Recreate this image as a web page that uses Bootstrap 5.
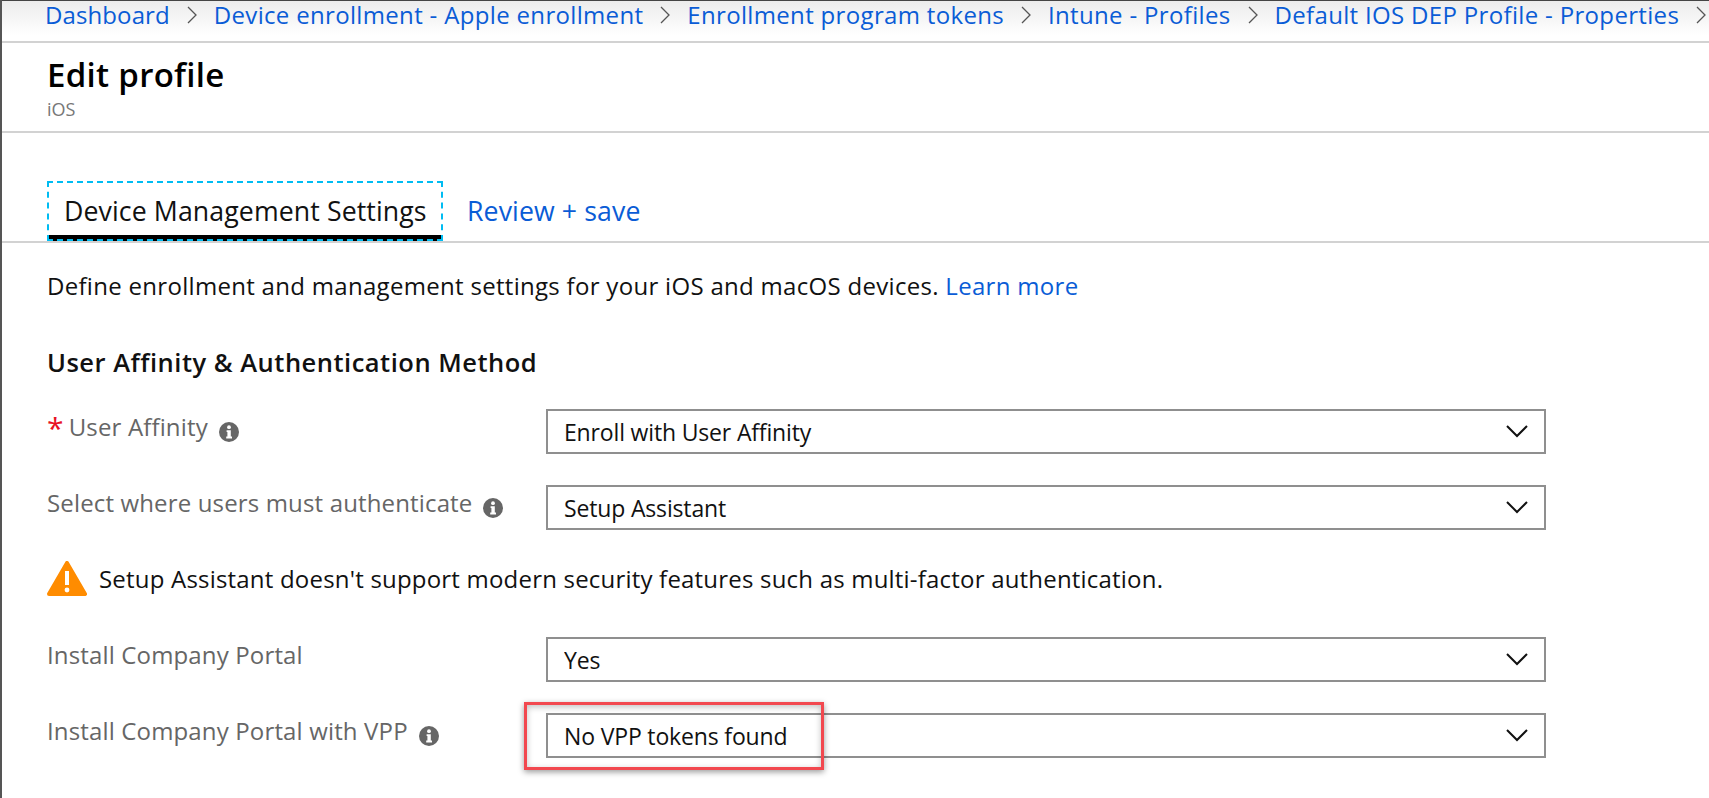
<!DOCTYPE html>
<html lang="en">
<head>
  <meta charset="UTF-8">
  <meta name="viewport" content="width=device-width, initial-scale=1.0">
  <title>Edit profile</title>
  <link href="https://cdn.jsdelivr.net/npm/bootstrap@5.3.0/dist/css/bootstrap.min.css" rel="stylesheet">
  <style>
    body {
      font-family: "Open Sans", "Noto Sans", sans-serif;
      font-size: 24px;
      letter-spacing: 0.33px;
      color: #111;
      background: #fff;
      height: 798px;
      overflow: hidden;
      position: relative;
      border-left: 2px solid #555;
    }
    a { color: #0a5cd6; text-decoration: none; }

    .crumb-bar {
      height: 43px;
      padding: 0 0 12px 43px;
      gap: 17px;
      line-height: 28px;
      border-top: 1px solid #444;
      border-bottom: 2px solid #d2d2d2;
      background: linear-gradient(#ececec, #fff 85%);
      white-space: nowrap;
    }
    .crumb-bar svg { flex: none; }
    .crumb-first { letter-spacing: 0.1px; }

    .page-head {
      height: 90px;
      padding: 9px 0 0 45px;
      border-bottom: 2px solid #d2d2d2;
    }
    .page-title { font-size: 33px; font-weight: 600; letter-spacing: 0.3px; line-height: 46px; margin: 0; color: #000; }
    .page-sub { font-size: 18px; letter-spacing: 0; line-height: 22px; color: #777; }

    .tab-strip {
      height: 62px;
      margin-top: 48px;
      padding-left: 45px;
      border-bottom: 2px solid #d2d2d2;
      gap: 24px;
      font-size: 26.7px;
      letter-spacing: 0.1px;
    }
    .tab-on {
      width: 396px;
      height: 60px;
      padding-left: 15px;
      color: #111;
      border: 2px dashed #00bcf2;
      background: linear-gradient(#000, #000) left bottom / 100% 6px no-repeat border-box;
    }

    .form-area { padding-left: 45px; }
    .intro { margin-top: 25px; line-height: 36px; letter-spacing: 0.3px; }
    .section-title { font-size: 25.5px; font-weight: 600; letter-spacing: 0.5px; margin: 40px 0 29px; line-height: 36px; }

    .field-row { height: 45px; }
    .field-next { margin-top: 31px; }
    .warn-next { margin-top: 40px; }
    .field-label { width: 499px; color: #666; gap: 11px; letter-spacing: 0.15px; }
    .label-text { margin-bottom: 9px; }
    .req { color: #e81123; font-size: 30px; line-height: 24px; vertical-align: -3px; margin-right: 5px; }
    .form-select.box-select {
      width: 1000px;
      height: 45px;
      font-size: 23px;
      letter-spacing: -0.16px;
      color: #111;
      border: 2px solid #8f8f8f;
      border-radius: 0;
      padding: 2px 60px 0 16px;
      background-image: url("data:image/svg+xml,%3csvg xmlns='http://www.w3.org/2000/svg' viewBox='0 0 22 13'%3e%3cpath fill='none' stroke='%23111' stroke-width='2' d='M1 1l10 10L21 1'/%3e%3c/svg%3e");
      background-position: right 16px center;
      background-size: 22px 13px;
    }
    .warn-row { margin-top: 31px; height: 36px; gap: 12px; letter-spacing: 0.2px; }
    .red-mark {
      position: absolute;
      left: 522px;
      top: 702px;
      width: 300px;
      height: 68px;
      border: 3px solid #f2484f;
      box-shadow: 0 2px 6px rgba(0, 0, 0, 0.4), inset 0 2px 6px rgba(0, 0, 0, 0.25);
      pointer-events: none;
    }
  </style>
</head>
<body>
  <nav class="crumb-bar d-flex align-items-center">
    <a href="#" class="crumb-first">Dashboard</a>
    <svg width="10" height="20" viewBox="0 0 10 20"><path d="M1 2l8 8-8 8" fill="none" stroke="#555" stroke-width="1.3"/></svg>
    <a href="#">Device enrollment - Apple enrollment</a>
    <svg width="10" height="20" viewBox="0 0 10 20"><path d="M1 2l8 8-8 8" fill="none" stroke="#555" stroke-width="1.3"/></svg>
    <a href="#">Enrollment program tokens</a>
    <svg width="10" height="20" viewBox="0 0 10 20"><path d="M1 2l8 8-8 8" fill="none" stroke="#555" stroke-width="1.3"/></svg>
    <a href="#">Intune - Profiles</a>
    <svg width="10" height="20" viewBox="0 0 10 20"><path d="M1 2l8 8-8 8" fill="none" stroke="#555" stroke-width="1.3"/></svg>
    <a href="#">Default IOS DEP Profile - Properties</a>
    <svg width="10" height="20" viewBox="0 0 10 20"><path d="M1 2l8 8-8 8" fill="none" stroke="#555" stroke-width="1.3"/></svg>
  </nav>

  <header class="page-head">
    <h1 class="page-title">Edit profile</h1>
    <div class="page-sub">iOS</div>
  </header>

  <div class="tab-strip d-flex align-items-center">
    <a href="#" class="tab-on d-flex align-items-center">Device Management Settings</a>
    <a href="#">Review + save</a>
  </div>

  <main class="form-area">
    <p class="intro mb-0">Define enrollment and management settings for your iOS and macOS devices. <a href="#">Learn more</a></p>
    <h2 class="section-title">User Affinity &amp; Authentication Method</h2>

    <div class="field-row d-flex align-items-center">
      <div class="field-label d-flex align-items-center">
        <span class="label-text"><span class="req">*</span>User Affinity</span>
        <svg width="20" height="20" viewBox="0 0 20 20"><circle cx="10" cy="10" r="10" fill="#666"/><path d="M7.6 8.2h4.2v6.4h1.2V16.4H7.2v-1.8h1.2v-4.6H7.6z" fill="#fff"/><circle cx="10" cy="5.2" r="1.9" fill="#fff"/></svg>
      </div>
      <select class="form-select box-select"><option>Enroll with User Affinity</option></select>
    </div>

    <div class="field-row d-flex align-items-center field-next">
      <div class="field-label d-flex align-items-center">
        <span class="label-text">Select where users must authenticate</span>
        <svg width="20" height="20" viewBox="0 0 20 20"><circle cx="10" cy="10" r="10" fill="#666"/><path d="M7.6 8.2h4.2v6.4h1.2V16.4H7.2v-1.8h1.2v-4.6H7.6z" fill="#fff"/><circle cx="10" cy="5.2" r="1.9" fill="#fff"/></svg>
      </div>
      <select class="form-select box-select"><option>Setup Assistant</option></select>
    </div>

    <div class="warn-row d-flex align-items-center">
      <svg width="40" height="36" viewBox="0 0 40 36"><path d="M20 2L38 33H2z" fill="#ff8c00" stroke="#ff8c00" stroke-width="4" stroke-linejoin="round"/><rect x="18" y="10" width="4" height="14" fill="#fff"/><circle cx="20" cy="29" r="2.4" fill="#fff"/></svg>
      <span>Setup Assistant doesn't support modern security features such as multi-factor authentication.</span>
    </div>

    <div class="field-row d-flex align-items-center warn-next">
      <div class="field-label d-flex align-items-center">
        <span class="label-text">Install Company Portal</span>
      </div>
      <select class="form-select box-select"><option>Yes</option></select>
    </div>

    <div class="field-row d-flex align-items-center field-next">
      <div class="field-label d-flex align-items-center">
        <span class="label-text">Install Company Portal with VPP</span>
        <svg width="20" height="20" viewBox="0 0 20 20"><circle cx="10" cy="10" r="10" fill="#666"/><path d="M7.6 8.2h4.2v6.4h1.2V16.4H7.2v-1.8h1.2v-4.6H7.6z" fill="#fff"/><circle cx="10" cy="5.2" r="1.9" fill="#fff"/></svg>
      </div>
      <select class="form-select box-select"><option>No VPP tokens found</option></select>
    </div>
  </main>

  <div class="red-mark"></div>

  <script src="https://cdn.jsdelivr.net/npm/bootstrap@5.3.0/dist/js/bootstrap.bundle.min.js"></script>
</body>
</html>
